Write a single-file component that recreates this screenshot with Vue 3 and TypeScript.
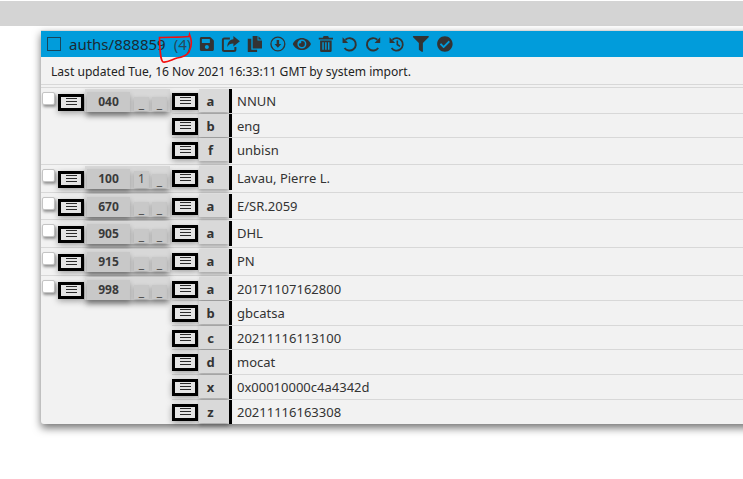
<script setup lang="ts">
interface Sub { code: string; value: string }
interface Field { tag: string; ind1: string; ind2: string; subs: Sub[] }
const fields: Field[] = [
  { tag: '040', ind1: '_', ind2: '_', subs: [
    { code: 'a', value: 'NNUN' }, { code: 'b', value: 'eng' }, { code: 'f', value: 'unbisn' } ] },
  { tag: '100', ind1: '1', ind2: '_', subs: [{ code: 'a', value: 'Lavau, Pierre L.' }] },
  { tag: '670', ind1: '_', ind2: '_', subs: [{ code: 'a', value: 'E/SR.2059' }] },
  { tag: '905', ind1: '_', ind2: '_', subs: [{ code: 'a', value: 'DHL' }] },
  { tag: '915', ind1: '_', ind2: '_', subs: [{ code: 'a', value: 'PN' }] },
  { tag: '998', ind1: '_', ind2: '_', subs: [
    { code: 'a', value: '20171107162800' }, { code: 'b', value: 'gbcatsa' },
    { code: 'c', value: '20211116113100' }, { code: 'd', value: 'mocat' },
    { code: 'x', value: '0x00010000c4a4342d' }, { code: 'z', value: '20211116163308' } ] },
]
</script>

<template>
  <div class="page">
    <div class="topbar"></div>
    <div class="card">
      <header class="head">
        <span class="head-box"></span>
        <span class="title">auths/888859</span>
        <span class="count">(4)</span>
        <div class="tools">
          <svg class="ic" viewBox="0 0 448 512"><path d="M433.941 129.941l-83.882-83.882A48 48 0 0 0 316.118 32H48C21.49 32 0 53.49 0 80v352c0 26.51 21.49 48 48 48h352c26.51 0 48-21.49 48-48V163.882a48 48 0 0 0-14.059-33.941zM224 416c-35.346 0-64-28.654-64-64 0-35.346 28.654-64 64-64s64 28.654 64 64c0 35.346-28.654 64-64 64zm96-304.52V212c0 6.627-5.373 12-12 12H76c-6.627 0-12-5.373-12-12V108c0-6.627 5.373-12 12-12h228.52c3.183 0 6.235 1.264 8.485 3.515l3.48 3.48A11.996 11.996 0 0 1 320 111.48z"/></svg>
          <svg class="ic" viewBox="0 0 18 16"><path d="M8 2.500H2.500A1.500 1.500 0 0 0 1 4v9.500A1.500 1.500 0 0 0 2.500 15H12a1.500 1.500 0 0 0 1.500-1.500V11" fill="none" stroke="#333" stroke-width="2"/><path d="M11.500 0 18 5.200 11.500 10.500V7.400C8.500 7.400 6.600 8.400 5.500 11 5.300 6.600 7.600 3.600 11.500 3.200z"/></svg>
          <svg class="ic" viewBox="0 0 16 18"><path d="M5.500 0H11v5h5v9H5.500z"/><path d="M12 .3 15.700 4H12z"/><path d="M4 3H0v15h10.500v-2.600H4z"/></svg>
          <svg class="ic" viewBox="0 0 18 18"><circle cx="9" cy="9" r="7.800" fill="none" stroke="#333" stroke-width="1.500"/><path d="M7.600 4.500h2.800v4.600h2.400L9 13.300 5.200 9.100h2.400z"/></svg>
          <svg class="ic" viewBox="0 0 576 512"><path d="M572.520 241.400C518.290 135.590 410.930 64 288 64S57.680 135.640 3.480 241.410a32.350 32.350 0 0 0 0 29.190C57.710 376.410 165.070 448 288 448s230.320-71.640 284.520-177.410a32.350 32.350 0 0 0 0-29.190zM288 400a144 144 0 1 1 144-144 143.930 143.930 0 0 1-144 144zm0-240a95.310 95.310 0 0 0-25.310 3.790 47.850 47.850 0 0 1-66.900 66.900A95.780 95.780 0 1 0 288 160z"/></svg>
          <svg class="ic" viewBox="0 0 16 18"><path d="M5.500 0h5l1 2H16v2H0V2h4.500zM1.500 5h13v11.500A1.500 1.500 0 0 1 13 18H3a1.500 1.500 0 0 1-1.500-1.500zM4 7v8.500h1.600V7zm3.200 0v8.500h1.600V7zm3.200 0v8.500H12V7z" fill-rule="evenodd"/></svg>
          <svg class="ic" viewBox="0 0 18 18"><path d="M4 4.200A7 7 0 1 1 3 13.500" fill="none" stroke="#333" stroke-width="2.200"/><path d="M0.800 1.500v6.300h6.300z"/></svg>
          <svg class="ic" viewBox="0 0 18 18"><path d="M14 4.200A7 7 0 1 0 15 13.500" fill="none" stroke="#333" stroke-width="2.200"/><path d="M17.200 1.500v6.300h-6.300z"/></svg>
          <svg class="ic" viewBox="0 0 18 18"><path d="M4 4.200A7 7 0 1 1 3 13.500" fill="none" stroke="#333" stroke-width="2"/><path d="M0.800 1.500v6.300h6.300z"/><path d="M9.500 5v4.600l3 2" fill="none" stroke="#333" stroke-width="1.800"/></svg>
          <svg class="ic" viewBox="0 0 512 512"><path d="M487.976 0H24.028C2.710 0-8.047 25.866 7.058 40.971L192 225.941V432c0 7.831 3.821 15.170 10.237 19.662l80 55.980C298.020 518.690 320 507.493 320 487.980V225.941l184.947-184.970C520.021 25.896 509.338 0 487.976 0z"/></svg>
          <svg class="ic" viewBox="0 0 512 512"><path d="M504 256c0 136.967-111.033 248-248 248S8 392.967 8 256 119.033 8 256 8s248 111.033 248 248zM227.314 387.314l184-184c6.248-6.248 6.248-16.379 0-22.627l-22.627-22.627c-6.248-6.249-16.379-6.249-22.628 0L216 308.118l-70.059-70.059c-6.248-6.248-16.379-6.248-22.628 0l-22.627 22.627c-6.248 6.248-6.248 16.379 0 22.627l104 104c6.249 6.249 16.379 6.249 22.628.001z"/></svg>
        </div>
      </header>
      <div class="info">Last updated Tue, 16 Nov 2021 16:33:11 GMT by system import.</div>
      <div class="fields">
        <div v-for="f in fields" :key="f.tag" class="field">
          <div class="controls">
            <input class="check" type="checkbox" />
            <span class="menu"><i></i></span>
            <div class="tagbox">
              <span class="tag">{{ f.tag }}</span>
              <span class="ind" :class="{ filled: f.ind1 !== '_' }">{{ f.ind1 }}</span>
              <span class="ind" :class="{ filled: f.ind2 !== '_' }">{{ f.ind2 }}</span>
            </div>
          </div>
          <div class="subs">
            <div v-for="s in f.subs" :key="s.code" class="sub">
              <span class="menu"><i></i></span>
              <span class="code">{{ s.code }}</span>
              <span class="value">{{ s.value }}</span>
            </div>
          </div>
        </div>
      </div>
    </div>
    <svg class="scribble" width="60" height="40" viewBox="0 0 60 40"><path d="M3.500 5.500C13 5 24 5.500 33 4.500L33.500 2.500 34.500 5.500C36 10 35.500 15 33 20 30 24 26 25.500 21 26 15 28 11 31 7 30 4.500 28 4 22 3.500 5.500z" fill="none" stroke="#f40f0f" stroke-width="1.600"/></svg>
  </div>
</template>

<style>
html, body { margin: 0; background: #fff; overflow: hidden; }
</style>

<style scoped>
.page {
  position: relative;
  width: 743px;
  height: 479px;
  overflow: hidden;
  padding-top: 1px;
  box-sizing: border-box;
  font-family: "Noto Sans", "Open Sans", sans-serif;
  color: #333;
}
.topbar { height: 25px; background: #d4d4d4; }
.card {
  margin: 4px -20px 0 41px;
  background: #f2f2f2;
  border-top: 1px solid #d8d8d8;
  box-shadow: 0 4px 9px rgba(0, 0, 0, 0.55);
  border-radius: 0 0 3px 3px;
}
.head {
  height: 26px;
  background: #019cdb;
  display: flex;
  align-items: center;
  font-size: 15px;
  color: #1c2a33;
}
.head-box {
  width: 14px;
  height: 14px;
  box-sizing: border-box;
  margin: 0 8px 0 6px;
  border: 1.5px solid #17465c;
}
.count { margin-left: 8px; color: #26485c; }
.tools { display: flex; align-items: center; margin-left: 4px; }
.ic { width: 23.75px; height: 16px; fill: #333; flex: none; }
.info {
  height: 27px;
  line-height: 29px;
  padding-left: 10px;
  font-size: 12.1px;
  color: #222;
  border-bottom: 1px solid #d8d8d8;
}
.fields { border-top: 1px solid #d8d8d8; margin-top: 2px; }
.field {
  display: flex;
  border-bottom: 1px solid #d8d8d8;
  padding-top: 1px;
  padding-bottom: 1.1px;
}
.field:last-child { border-bottom: 0; padding-bottom: 0; }
.controls {
  width: 131px;
  flex: none;
  height: 24px;
  display: flex;
  align-items: flex-start;
}
.check {
  appearance: none;
  width: 13px;
  height: 13px;
  margin: 3px 3px 0 1px;
  background: #fff;
  border: 1px solid #c4c4c4;
  border-radius: 2px;
  box-shadow: 1px 2px 3px rgba(0, 0, 0, 0.4);
  flex: none;
  box-sizing: border-box;
}
.menu {
  width: 26px;
  height: 17px;
  box-sizing: border-box;
  flex: none;
  border: 3px solid #000;
  background: #e4e4e4;
  display: flex;
  align-items: flex-start;
  justify-content: center;
  padding-top: 1px;
  margin-top: 5px;
  box-shadow: 0 2px 6px rgba(0, 0, 0, 0.35);
}
.menu i {
  display: block;
  width: 11px;
  height: 7px;
  box-sizing: border-box;
  border-top: 1px solid #2a2a2a;
  border-bottom: 1px solid #2a2a2a;
  background: linear-gradient(#2a2a2a, #2a2a2a) center / 100% 1px no-repeat;
}
.tagbox {
  width: 85px;
  height: 23px;
  margin-left: 1px;
  background: #d8d8d8;
  display: flex;
  align-items: flex-end;
  flex: none;
  box-shadow: 0 4px 6px rgba(0, 0, 0, 0.35);
}
.tag {
  width: 43px;
  height: 20px;
  margin: 0 4px 0 2px;
  background: #c8c8c8;
  text-align: center;
  line-height: 20px;
  font-size: 12px;
  font-weight: 700;
  color: #3a3a3a;
  flex: none;
  box-shadow: 0 3px 5px rgba(0, 0, 0, 0.3);
}
.ind {
  width: 15px;
  height: 14px;
  margin: 0 3px 1px 0;
  background: #c8c8c8;
  text-align: center;
  line-height: 14px;
  font-size: 12px;
  color: #444;
  flex: none;
  box-shadow: 0 2px 4px rgba(0, 0, 0, 0.25);
}
.ind.filled { height: 17px; line-height: 15px; }
.subs { flex: 1; }
.sub {
  height: 24.6px;
  box-sizing: border-box;
  display: flex;
  border-bottom: 1px solid #d8d8d8;
}
.sub:last-child { border-bottom: 0; }
.sub .menu { margin-top: 4px; }
.code {
  width: 30px;
  height: 23px;
  margin-left: 1px;
  padding-right: 7px;
  box-sizing: border-box;
  background: #d9d9d9;
  text-align: center;
  line-height: 24px;
  font-size: 13px;
  font-weight: 700;
  color: #333;
  flex: none;
  box-shadow: 0 3px 4px rgba(0, 0, 0, 0.3);
}
.value {
  flex: 1;
  border-left: 3px solid #000;
  padding-left: 5px;
  font-size: 13px;
  line-height: 24px;
  color: #333;
}
.scribble { position: absolute; left: 156px; top: 32px; }
</style>
